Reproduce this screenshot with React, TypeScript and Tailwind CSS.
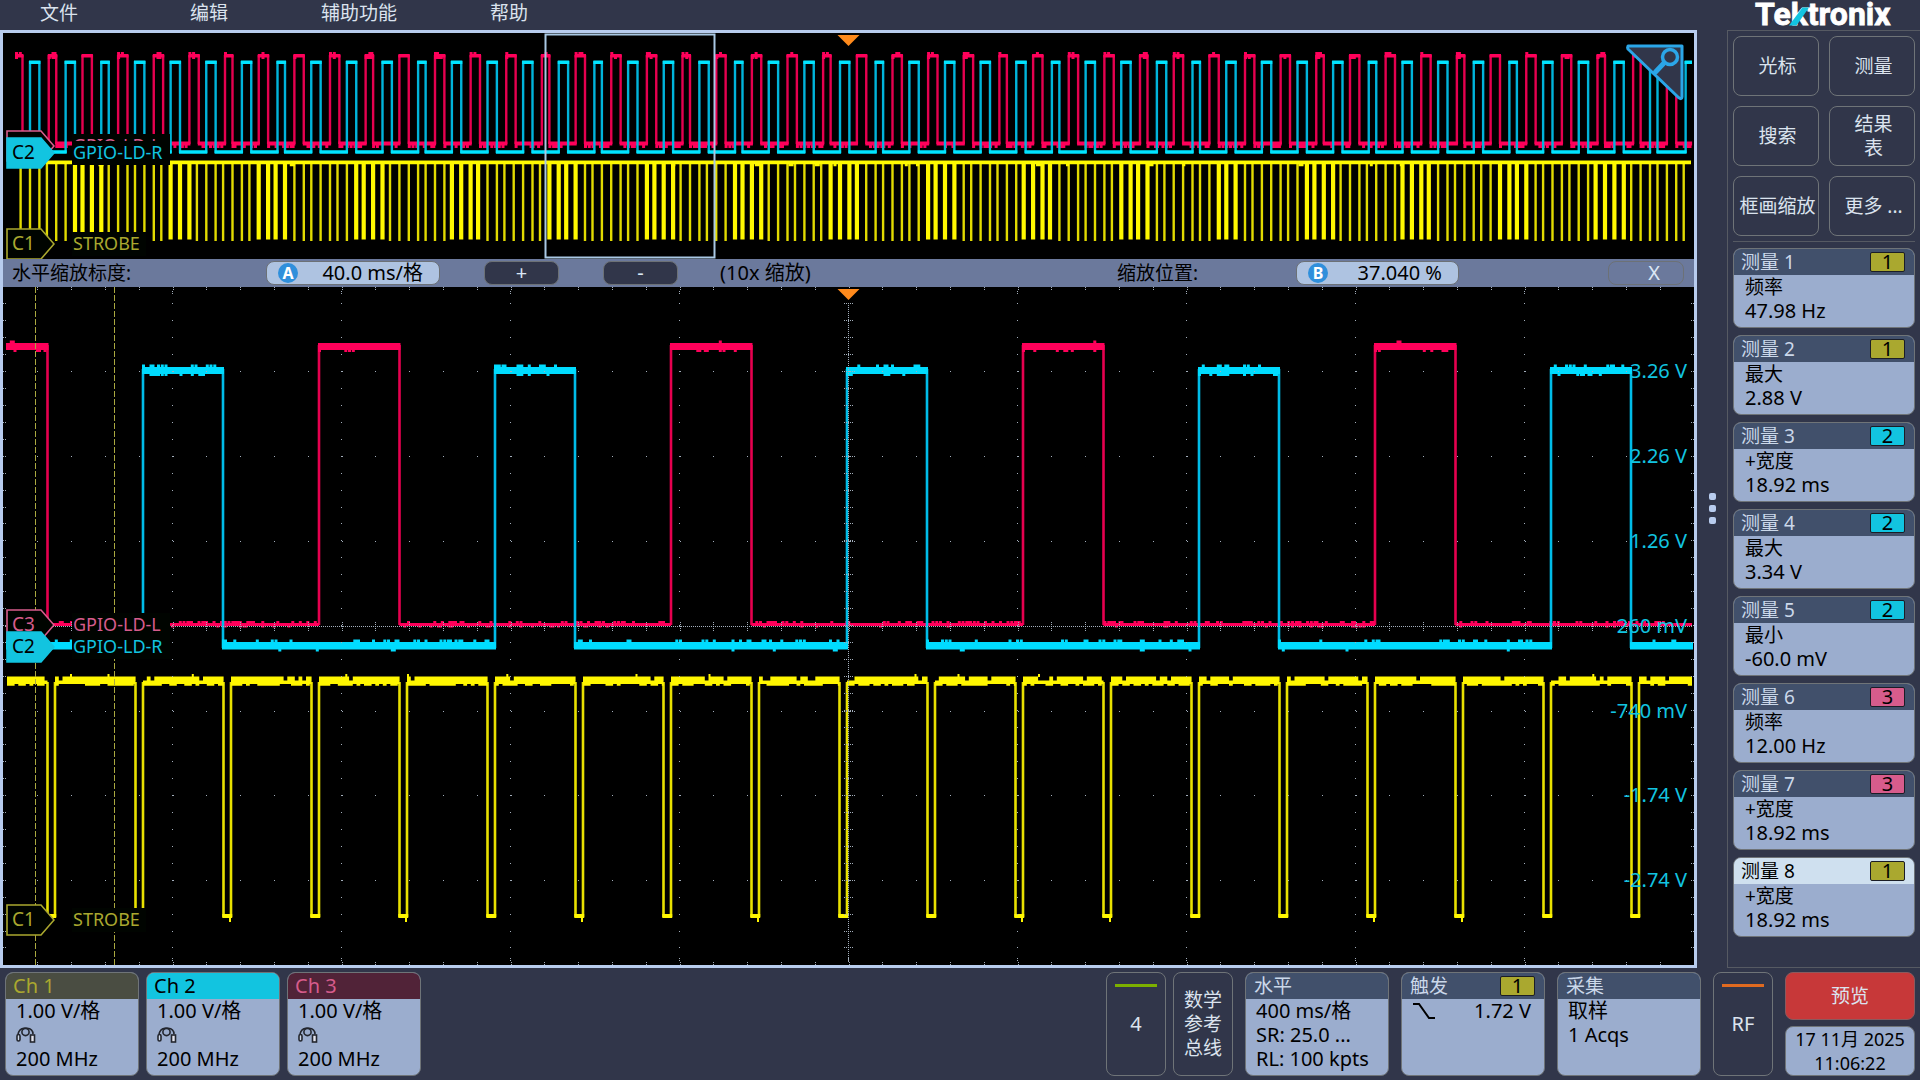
import { clsx } from 'clsx';

type ChannelId = 1 | 2 | 3;

interface Measurement {
  id: number;
  kind: string;
  value: string;
  channel: ChannelId;
  selected?: boolean;
}

const MENU = ['文件', '编辑', '辅助功能', '帮助'];
const ACTIONS = ['光标', '测量', '搜索', '结果 表', '框画缩放', '更多 ...'];

const MEASUREMENTS: Measurement[] = [
  { id: 1, kind: '频率', value: '47.98 Hz', channel: 1 },
  { id: 2, kind: '最大', value: '2.88 V', channel: 1 },
  { id: 3, kind: '+宽度', value: '18.92 ms', channel: 2 },
  { id: 4, kind: '最大', value: '3.34 V', channel: 2 },
  { id: 5, kind: '最小', value: '-60.0 mV', channel: 2 },
  { id: 6, kind: '频率', value: '12.00 Hz', channel: 3 },
  { id: 7, kind: '+宽度', value: '18.92 ms', channel: 3 },
  { id: 8, kind: '+宽度', value: '18.92 ms', channel: 1, selected: true },
];

const CHANNELS = [
  { name: 'Ch 1', header: 'bg-[#4a4d42] text-[#aaa82f]' },
  { name: 'Ch 2', header: 'bg-[#12c4e0] text-black' },
  { name: 'Ch 3', header: 'bg-[#512338] text-[#d75c8c]' },
];

const BADGE: Record<ChannelId, string> = {
  1: 'bg-[#aaa82f]',
  2: 'bg-[#12c4e0]',
  3: 'bg-[#d75c8c]',
};

const TAG_COLOR: Record<ChannelId, string> = {
  1: 'text-[#aaa82f]',
  2: 'text-[#12c4e0]',
  3: 'text-[#d75c8c]',
};

/* ---------- waveform helpers ---------- */

const X0 = 7;
const X1 = 1692;
const COL = 1.875;

function makeRandom(seed: number) {
  let s = seed;
  return () => {
    s = (s * 1664525 + 1013904223) % 4294967296;
    return s / 4294967296;
  };
}

const rect = (x: number, y: number, w: number, h: number) =>
  `M${x.toFixed(1)} ${y.toFixed(1)}h${w.toFixed(1)}v${h.toFixed(1)}h${(-w).toFixed(1)}z`;

// A horizontal level with noise bumps above and below it
function level(x0: number, x1: number, top: number, bottom: number, up: number, down: number, rnd: () => number, size = 2.5) {
  let d = rect(x0, top, x1 - x0, bottom - top);
  for (let x = x0; x < x1 - 4; x += 3.75) {
    const w = rnd() > 0.7 ? 5 : 3;
    if (rnd() < up) d += rect(x, top - size, Math.min(w, x1 - x), size + 0.5);
    if (rnd() < down) d += rect(x, bottom - 0.5, Math.min(w, x1 - x), size);
  }
  return d;
}

interface Pulse {
  a: number;
  b: number;
}

function pulses(first: number, width: number, period: number, start: number, end: number, snap = false): Pulse[] {
  const out: Pulse[] = [];
  const q = (v: number) => (snap ? Math.round(v / COL) * COL : v);
  for (let x = first; x < end; x += period) {
    if (x + width <= start) continue;
    out.push({ a: Math.max(q(x), start), b: Math.min(q(x + width), end) });
  }
  return out;
}

function gaps(list: Pulse[], start: number, end: number): Pulse[] {
  const out: Pulse[] = [];
  let x = start;
  list.forEach((p) => {
    if (p.a > x) out.push({ a: x, b: p.a });
    x = p.b;
  });
  if (x < end) out.push({ a: x, b: end });
  return out;
}

function edges(list: Pulse[], y0: number, y1: number, start: number, end: number) {
  return list
    .map((p) => (p.a > start ? `M${p.a} ${y0}V${y1}` : '') + (p.b < end ? `M${p.b} ${y0}V${y1}` : ''))
    .join('');
}

/* ---------- main (zoomed) window ---------- */

const r1 = makeRandom(7);
const magenta = pulses(-33, 80.5, 352, X0, X1);
const magentaFill =
  magenta.map((p) => level(p.a - 1, p.b + 1, 343, 350, 0.05, 0.2, r1)).join('') +
  gaps(magenta, X0, X1).map((p) => level(p.a, p.b, 623, 626, 0.4, 0.12, r1, 2)).join('');

const cyan = pulses(143, 80, 352, X0, X1);
const cyanFill =
  cyan.map((p) => level(p.a - 1, p.b + 1, 367, 374, 0.35, 0.3, r1)).join('') +
  gaps(cyan, X0, X1).map((p) => level(p.a - 1, p.b + 1, 642, 649.5, 0.28, 0.03, r1)).join('');

const strobe = pulses(47.5, 7.5, 88, X0, X1);
const strobeFill =
  gaps(strobe, X0, X1)
    .map((p) => {
      let d = rect(p.a, 680.5, p.b - p.a, 3.5);
      for (let x = p.a; x < p.b; x += 3.75) {
        const w = Math.min(3.75, p.b - x);
        if (r1() > 0.14) d += rect(x, 676.5, w, 4.5);
        if (r1() > 0.4) d += rect(x, 683.5, w, 2.2);
        if (r1() > 0.98) d += rect(x, 674, 2, 3);
      }
      return d;
    })
    .join('') +
  strobe.map((p) => rect(p.a - 1.2, 914, p.b - p.a + 2.4, 4) + (r1() > 0.6 ? rect(p.b - 2, 917, 2, 5) : '')).join('');

const GRID_X = Array.from({ length: 9 }, (_, i) => 172.4 + i * 169);
const GRID_Y = [371.3, 456.3, 541.3, 710.5, 795.3, 880.3];

function gridPath() {
  let d = '';
  const dot = (x: number, y: number, w = 1, h = 1) => {
    d += `M${Math.round(x)} ${Math.round(y)}h${w}v${h}h${-w}z`;
  };
  for (let y = 303; y < 962; y += 16.96) {
    GRID_X.forEach((x) => x !== GRID_X[4] && dot(x, y));
    dot(3, y, 1);
    dot(5, y, 1);
    dot(1691, y, 1);
    dot(1693, y, 1);
    for (let x = 844; x <= 852; x += 2) dot(x, y);
  }
  GRID_Y.forEach((y) => {
    for (let x = 37.4; x < 1690; x += 33.8) dot(x, y);
    for (let x = 842; x <= 854; x += 2) dot(x, y);
  });
  for (let x = 37.4; x < 1690; x += 33.8) {
    dot(x, 287, 1, 1);
    dot(x, 289, 1, 1);
    dot(x, 962, 1, 1);
    dot(x, 964, 1, 1);
    for (let y = 622; y <= 630; y += 2) dot(x, y);
  }
  GRID_X.forEach((x) => {
    [291, 293, 960, 958].forEach((y) => dot(x, y));
  });
  for (let x = 5; x < 1692; x += 2) dot(x, 626);
  for (let y = 303; y < 962; y += 2) dot(848, y);
  return d;
}

/* ---------- overview window ---------- */

const OX0 = 16;
const OX1 = 1691;
const r2 = makeRandom(21);
const oMagenta = pulses(13, 8.9, 35.2, OX0, OX1, true);
const oMagentaFill =
  oMagenta.map((p) => level(p.a - 1, p.b + 1, 54, 57.5, 0.5, 0.3, r2, 2)).join('') +
  gaps(oMagenta, OX0, OX1).map((p) => level(p.a - 1, p.b + 1, 141.5, 145.5, 0, 0.6, r2, 3)).join('');
const oCyan = pulses(30.3, 8.9, 35.2, OX0, OX1, true);
const oCyanFill =
  oCyan.map((p) => rect(p.a - 1, 60.5, p.b - p.a + 2, 3.5)).join('') +
  gaps(oCyan, OX0, OX1).map((p) => rect(p.a - 1, 150.3, p.b - p.a + 2, 3.4)).join('');

function overviewStrobe() {
  let thin = '';
  let thick = '';
  for (let n = -60; n < 130; n++) {
    const x = Math.round((549.3 + n * 8.8) / COL) * COL;
    if (x > OX1) break;
    const phase = (((n + 0.6) % 10.8) + 10.8) % 10.8;
    if (phase < 3.8) thick += rect(x - 2.1, 163, 4.2, 76.5);
    else thin += rect(x - 1.2, 163, 2.4, 78);
  }
  return { thin, thick };
}
const oStrobe = overviewStrobe();

/* ---------- small parts ---------- */

function Badge({ channel }: { channel: ChannelId }) {
  return (
    <span className={clsx('flex h-5 w-[35px] items-center justify-center rounded-xs border border-[#1b1d26] text-black', BADGE[channel])}>
      {channel}
    </span>
  );
}

function ProbeIcon() {
  return (
    <svg width="20" height="16" viewBox="0 0 20 16" fill="none" stroke="#23262e" strokeWidth="1.6" aria-hidden="true">
      <path d="M2 7C3 3 5 1.5 8 1.2h3c4 .3 6 3 6 6" />
      <circle cx="9.5" cy="5" r="3.6" />
      <rect x="1" y="7.5" width="3" height="6.5" rx="1.5" fill="#ccd6e8" />
      <rect x="14.5" y="8" width="4" height="7" fill="#e4e4ee" />
    </svg>
  );
}

interface MarkerProps {
  channel: ChannelId;
  label: string;
  y: number;
  top: number;
  height: number;
}

// Channel handle on the left edge plus its trace name
function Marker({ channel, label, y, top, height }: MarkerProps) {
  const filled = channel === 2;
  return (
    <div
      className={clsx('absolute left-[3px] flex h-8 -translate-y-1/2 items-center', TAG_COLOR[channel])}
      style={{ top: `${((y - top) / height) * 100}%` }}
    >
      <div className="relative h-8 w-12">
        <svg className="absolute inset-0" width="49" height="32" viewBox="0 0 49 32" aria-hidden="true">
          <path d="M1 1H35L48 16L35 31H1Z" fill={filled ? 'currentColor' : '#000400'} stroke="currentColor" strokeWidth="1.6" />
        </svg>
        <span className={clsx('relative block pl-[6px] text-[19px] leading-[30px]', filled && 'text-black')}>C{channel}</span>
      </div>
      <span className={clsx('ml-[18px] h-6 bg-[#000400] pl-px text-[18px] leading-[22px]', channel === 1 ? 'w-[74px]' : 'w-[98px]')}>
        {label}
      </span>
    </div>
  );
}

function Logo() {
  return (
    <svg width="160" height="30" viewBox="0 0 160 30" role="img" aria-label="Tektronix">
      <g className="font-['Roboto',sans-serif] font-bold" fontSize="32" fill="#fff" stroke="#fff" strokeWidth="0.8">
        <text x="2" y="25">Tektronix</text>
      </g>
      <path d="M36 25.500L49.500 7.500H56L43.500 25.500Z" fill="#12c4e0" />
    </svg>
  );
}

function Overview() {
  return (
    <section className="relative flex-[226] overflow-hidden bg-black">
      <svg className="absolute inset-0 h-full w-full" viewBox="3 33 1691 226" preserveAspectRatio="none" aria-hidden="true">
        <path d={edges(oMagenta, 55, 144, OX0, OX1)} stroke="#e6004f" strokeWidth="2.4" />
        <path d={oMagentaFill} fill="#ff005a" />
        <path d={edges(oCyan, 61, 153, OX0, OX1)} stroke="#00b4da" strokeWidth="2.4" />
        <path d={oCyanFill} fill="#00e4ff" />
        <path d={oStrobe.thin} fill="#e2da00" />
        <path d={oStrobe.thick} fill="#fff800" />
        <path d={level(46, OX1, 160.5, 164.3, 0, 0.04, r2)} fill="#fffa00" />
        <path d="M545.5 34.5H714.5V257.5H545.5Z" fill="none" stroke="#a9c8e4" strokeWidth="2" />
        <path d="M837.5 35H859.5L848.5 46Z" fill="#ff8a1c" />
      </svg>
      <Marker channel={3} label="GPIO-LD-L" y={146} top={33} height={226} />
      <Marker channel={2} label="GPIO-LD-R" y={153} top={33} height={226} />
      <Marker channel={1} label="STROBE" y={244} top={33} height={226} />
      <button type="button" aria-label="缩放" className="absolute top-[10px] right-[9px]">
        <svg width="60" height="58" viewBox="0 0 60 58" fill="none" stroke="#2ba6e8" strokeLinejoin="round">
          <path d="M3 3H57V54Q57 57 53.500 54.500L3 6Q1.500 3 5 3Z" fill="#31364a" strokeWidth="3" />
          <circle cx="45" cy="14" r="7.500" strokeWidth="3.500" />
          <path d="M39 20L30.500 29" strokeWidth="5" strokeLinecap="round" />
        </svg>
      </button>
    </section>
  );
}

function Readout({ knob, value, className }: { knob: string; value: string; className: string }) {
  return (
    <button type="button" className={clsx('flex h-6 items-center rounded-lg border border-[#6c7176] bg-[#aec3e1] pr-4 pl-[11px] text-black', className)}>
      <span className="flex size-5 items-center justify-center rounded-full bg-[#2f8fdb] text-base font-bold text-white">{knob}</span>
      <span className="flex-1 text-right">{value}</span>
    </button>
  );
}

function ZoomBar() {
  return (
    <div className="flex h-7 shrink-0 items-center bg-[#6b799c] whitespace-nowrap text-black">
      <span className="w-[263px] pl-[9px] text-[19px]">水平缩放标度:</span>
      <Readout knob="A" value="40.0 ms/格" className="w-[174px]" />
      <button type="button" className="ml-11 h-6 w-[75px] rounded-lg border border-[#6c7176] bg-[#31364a] leading-5 text-[#dbe7f5]">+</button>
      <button type="button" className="ml-11 h-6 w-[75px] rounded-lg border border-[#6c7176] bg-[#31364a] leading-5 text-[#dbe7f5]">-</button>
      <span className="ml-[42px] flex-1">(10x 缩放)</span>
      <span className="w-[179px] text-[19px]">缩放位置:</span>
      <Readout knob="B" value="37.040 %" className="w-[163px]" />
      <button type="button" className="mr-[10px] ml-[149px] h-6 w-[76px] rounded-lg border border-[#6c7176] pl-4 leading-5 text-[#dbe7f5]">X</button>
    </div>
  );
}

const SCALE = [
  { label: '3.26 V', y: 371 },
  { label: '2.26 V', y: 456 },
  { label: '1.26 V', y: 541 },
  { label: '260 mV', y: 626 },
  { label: '-740 mV', y: 711 },
  { label: '-1.74 V', y: 795 },
  { label: '-2.74 V', y: 880 },
];

function ZoomWindow() {
  return (
    <section className="relative flex-[678] overflow-hidden bg-black">
      <svg className="absolute inset-0 h-full w-full" viewBox="3 287 1691 678" preserveAspectRatio="none" aria-hidden="true">
        <path d={edges(magenta, 345, 625, X0, X1)} stroke="#e6004f" strokeWidth="2.6" />
        <path d={magentaFill} fill="#ff005a" />
        <path d={edges(cyan, 369, 648, X0, X1)} stroke="#00bce8" strokeWidth="2.6" />
        <path d={cyanFill} fill="#00dcff" />
        <path d={edges(strobe, 682, 917, X0, X1)} stroke="#e8e000" strokeWidth="2.6" />
        <path d={strobeFill} fill="#fff600" />
        <path d={gridPath()} fill="#a3aebb" shapeRendering="crispEdges" />
        <path d="M35.500 287V965M114.500 287V965" stroke="#aaa840" strokeDasharray="6 2" />
        <path d="M837.500 289H859.500L848.500 300Z" fill="#ff8a1c" />
      </svg>
      <Marker channel={3} label="GPIO-LD-L" y={625} top={287} height={678} />
      <Marker channel={2} label="GPIO-LD-R" y={647} top={287} height={678} />
      <Marker channel={1} label="STROBE" y={920} top={287} height={678} />
      {SCALE.map((s) => (
        <span
          key={s.label}
          className="absolute right-[7px] -translate-y-1/2 leading-6 text-[#12c4e0]"
          style={{ top: `${((s.y - 287) / 678) * 100}%` }}
        >
          {s.label}
        </span>
      ))}
    </section>
  );
}

function MeasureCard({ m }: { m: Measurement }) {
  return (
    <button type="button" className="flex h-20 w-full flex-col overflow-hidden rounded-lg border border-[#6f7478] bg-[#9badce] text-left text-black">
      <span
        className={clsx(
          'flex h-[26px] w-full shrink-0 items-center justify-between pr-[9px] pl-[7px] leading-6',
          m.selected ? 'bg-[#cfe0ef] text-black' : 'bg-[#41506b] text-[#cbd8ea]'
        )}
      >
        <span className="text-[19px]">测量 {m.id}</span>
        <Badge channel={m.channel} />
      </span>
      <span className="pl-[11px] text-[19px] leading-6">{m.kind}</span>
      <span className="pl-[11px] leading-6">{m.value}</span>
    </button>
  );
}

function Sidebar() {
  return (
    <aside className="flex w-[193px] flex-col">
      <div className="flex h-[30px] shrink-0 items-center pl-[26px]">
        <Logo />
      </div>
      <div className="flex-1 border-y border-l border-[#565a63] pr-[5px] pl-[5px]">
        <div className="grid grid-cols-2 gap-[10px] border-b border-[#565a63] pt-[5px] pb-[5px]">
          {ACTIONS.map((a) => (
            <button key={a} type="button" className="flex h-[60px] items-center justify-center rounded-lg border border-[#6f7478] pl-[3px] text-[19px] leading-6 text-[#dbe3ee]">
              {a === '结果 表' ? <span className="w-10">结果表</span> : <span className="whitespace-nowrap">{a}</span>}
            </button>
          ))}
        </div>
        <div className="flex flex-col gap-[7px] pt-[6px]">
          {MEASUREMENTS.map((m) => (
            <MeasureCard key={m.id} m={m} />
          ))}
        </div>
      </div>
    </aside>
  );
}

function InfoCard({ title, channel, children }: { title: string; channel?: ChannelId; children: React.ReactNode }) {
  return (
    <button type="button" className="flex w-[144px] flex-col overflow-hidden rounded-lg border border-[#6f7478] bg-[#9badce] text-left text-black">
      <span className="flex h-[26px] w-full shrink-0 items-center justify-between bg-[#41506b] pr-[9px] pl-2 leading-6 text-[#cbd8ea]">
        <span className="text-[19px]">{title}</span>
        {channel && <Badge channel={channel} />}
      </span>
      <span className="block w-full px-[10px] leading-6 whitespace-nowrap">{children}</span>
    </button>
  );
}

function StatusBar() {
  return (
    <footer className="flex h-28 shrink-0 items-stretch pt-1 pr-[5px] pb-1 pl-[5px]">
      <div className="flex flex-1 gap-[7px]">
        {CHANNELS.map((c) => (
          <button key={c.name} type="button" className="flex w-[134px] flex-col overflow-hidden rounded-lg border border-[#6f7478] bg-[#9badce] text-left text-black">
            <span className={clsx('block h-[26px] w-full shrink-0 pl-[7px] leading-[26px]', c.header)}>{c.name}</span>
            <span className="pl-[10px] leading-6">1.00 V/格</span>
            <span className="flex h-6 items-center pl-[10px]">
              <ProbeIcon />
            </span>
            <span className="pl-[10px] leading-6">200 MHz</span>
          </button>
        ))}
      </div>
      <div className="flex gap-3">
        <div className="flex gap-[7px]">
          <button type="button" className="relative flex w-[60px] items-center justify-center rounded-lg border border-[#6f7478] text-[#dbe3ee]">
            <span className="absolute inset-x-2 top-[11px] h-[3px] bg-[#7cb000]" />4
          </button>
          <button type="button" className="flex w-[60px] items-center justify-center rounded-lg border border-[#6f7478] text-[19px] leading-6 text-[#dbe3ee]">
            <span className="w-[38px]">数学参考总线</span>
          </button>
        </div>
        <InfoCard title="水平">
          400 ms/格
          <br />
          SR: 25.0 ...
          <br />
          RL: 100 kpts
        </InfoCard>
        <InfoCard title="触发" channel={1}>
          <span className="flex items-center justify-between pr-[3px]">
            <svg width="24" height="18" viewBox="0 0 24 18" fill="none" stroke="#000" strokeWidth="2" aria-label="下降沿">
              <path d="M1 2H7L17 16H23" />
            </svg>
            1.72 V
          </span>
        </InfoCard>
        <InfoCard title="采集">
          取样
          <br />1 Acqs
        </InfoCard>
        <button type="button" className="relative flex w-[60px] items-center justify-center rounded-lg border border-[#6f7478] text-[#dbe3ee]">
          <span className="absolute inset-x-2 top-[11px] h-[3px] bg-[#e06a20]" />
          RF
        </button>
        <div className="flex w-[130px] flex-col gap-[6px]">
          <button type="button" className="h-[49px] rounded-lg border border-[#8b5a5e] bg-[#c73839] text-[19px] text-[#dbe3ee]">预览</button>
          <div className="flex-1 rounded-lg border border-[#6f7478] bg-[#9badce] text-center text-[18px] leading-6 whitespace-nowrap text-black">
            17 11月 2025
            <br />
            11:06:22
          </div>
        </div>
      </div>
    </footer>
  );
}

export default function App() {
  return (
    <div className="flex min-h-screen flex-col overflow-hidden bg-[#31364a] font-['Noto_Sans','Noto_Sans_CJK_SC',sans-serif] text-xl leading-6">
      <div className="flex flex-1">
        <main className="flex min-w-0 flex-1 flex-col">
          <nav className="-ml-4 flex h-[30px] shrink-0 text-[19px] text-[#dbe3ee]">
            {MENU.map((item) => (
              <button key={item} type="button" className="w-[150px] pb-1">
                {item}
              </button>
            ))}
          </nav>
          <div className="flex flex-1 flex-col border-[3px] border-[#b8ccee]">
            <Overview />
            <ZoomBar />
            <ZoomWindow />
          </div>
        </main>
        <div className="flex w-[30px] flex-col items-center justify-center gap-[5px] pt-12">
          <span className="size-[7px] rounded-xs bg-[#b8ccee]" />
          <span className="size-[7px] rounded-xs bg-[#b8ccee]" />
          <span className="size-[7px] rounded-xs bg-[#b8ccee]" />
        </div>
        <Sidebar />
      </div>
      <StatusBar />
    </div>
  );
}
